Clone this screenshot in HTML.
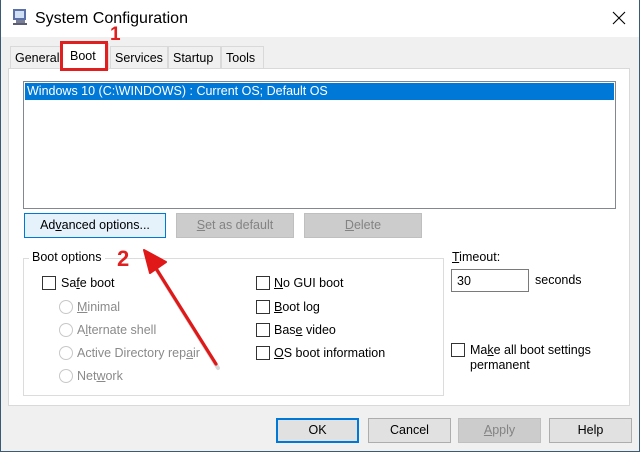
<!DOCTYPE html>
<html><head><meta charset="utf-8"><style>
*{box-sizing:border-box;margin:0;padding:0}
body{width:640px;height:452px;overflow:hidden;background:#f0f0f0;font-family:"Liberation Sans",sans-serif;font-size:12.5px;color:#000;position:relative}
.a{position:absolute;white-space:nowrap}
.tab{position:absolute;top:46px;height:22px;border:1px solid #d9d9d9;border-bottom:none;background:#f0f0f0;font-size:12.5px;padding:4px 0 0 4px;overflow:visible}
.btn{position:absolute;height:25px;border:1px solid #adadad;background:#e1e1e1;text-align:center;line-height:23px;font-size:12.5px}
.dis{background:#cccccc;border-color:#bfbfbf;color:#838383}
.cb{position:absolute;width:14px;height:14px;border:1px solid #333;background:#fff}
.rd{position:absolute;width:14px;height:14px;border:1px solid #c8c8c8;border-radius:50%;background:#fff}
.g{color:#8a8a8a}
u{text-decoration:underline}
</style></head><body>
<div class="a" style="left:0;top:0;width:640px;height:37px;background:#fff"></div>
<div class="a" style="left:0;top:0;width:1px;height:452px;background:#3b5a74"></div>
<div class="a" style="left:639px;top:0;width:1px;height:452px;background:#3b5a74"></div>
<div class="a" style="left:0;top:451px;width:640px;height:1px;background:#3b5a74"></div>
<svg class="a" style="left:11px;top:8px" width="18" height="18"><rect x="2" y="1" width="13" height="11" fill="#5b6fa8"/><rect x="4" y="3" width="9" height="7" fill="#cfe0f5"/><rect x="5" y="12" width="9" height="3" fill="#7a7f95"/><rect x="2" y="15" width="14" height="2" fill="#5a5f75"/></svg>
<div class="a" style="left:35px;top:10px;font-size:16px">System Configuration</div>
<svg class="a" style="left:611px;top:10px" width="16" height="16"><path d="M2 2L14 14M14 2L2 14" stroke="#000" stroke-width="1.1"/></svg>

<div class="a" style="left:8px;top:68px;width:622px;height:338px;background:#fff;border:1px solid #d9d9d9"></div>
<div class="tab" style="left:10px;width:52px">General</div>
<div class="tab" style="left:110px;width:58px">Services</div>
<div class="tab" style="left:168px;width:53px">Startup</div>
<div class="tab" style="left:221px;width:43px">Tools</div>
<div class="a" style="left:62px;top:43px;width:47px;height:27px;background:#fff;border:1px solid #d9d9d9;border-bottom:none;font-size:12.5px;padding:5px 0 0 7px">Boot</div>
<div class="a" style="left:60px;top:41px;width:48px;height:30px;border:3px solid #e02020"></div>
<div class="a" style="left:110px;top:24px;font-size:19px;font-weight:bold;color:#e02020">1</div>

<div class="a" style="left:23px;top:81px;width:593px;height:128px;border:1px solid #828790;background:#fff"></div>
<div class="a" style="left:25px;top:83px;width:589px;height:17px;background:#0078d7;color:#fff;padding:1px 0 0 2px;font-size:12.5px">Windows 10 (C:\WINDOWS) : Current OS; Default OS</div>

<div class="btn" style="left:24px;top:213px;width:142px;background:#e5f1fb;border-color:#0078d7">Ad<u>v</u>anced options...</div>
<div class="btn dis" style="left:176px;top:213px;width:118px"><u>S</u>et as default</div>
<div class="btn dis" style="left:304px;top:213px;width:118px"><u>D</u>elete</div>

<div class="a" style="left:23px;top:258px;width:421px;height:138px;border:1px solid #dcdcdc"></div>
<div class="a" style="left:29px;top:250px;background:#fff;padding:0 3px">Boot options</div>
<div class="cb" style="left:42px;top:276px"></div><div class="a" style="left:61px;top:276px">Sa<u>f</u>e boot</div>
<div class="rd" style="left:59px;top:300px"></div><div class="a g" style="left:77px;top:300px"><u>M</u>inimal</div>
<div class="rd" style="left:59px;top:323px"></div><div class="a g" style="left:77px;top:323px">A<u>l</u>ternate shell</div>
<div class="rd" style="left:59px;top:346px"></div><div class="a g" style="left:77px;top:346px">Active Directory rep<u>a</u>ir</div>
<div class="rd" style="left:59px;top:369px"></div><div class="a g" style="left:77px;top:369px">Net<u>w</u>ork</div>
<div class="cb" style="left:256px;top:276px"></div><div class="a" style="left:274px;top:276px"><u>N</u>o GUI boot</div>
<div class="cb" style="left:256px;top:300px"></div><div class="a" style="left:274px;top:300px"><u>B</u>oot log</div>
<div class="cb" style="left:256px;top:323px"></div><div class="a" style="left:274px;top:323px">Bas<u>e</u> video</div>
<div class="cb" style="left:256px;top:346px"></div><div class="a" style="left:274px;top:346px"><u>O</u>S boot information</div>

<div class="a" style="left:452px;top:250px"><u>T</u>imeout:</div>
<div class="a" style="left:451px;top:269px;width:78px;height:23px;border:1px solid #7a7a7a;background:#fff;padding:4px 0 0 5px">30</div>
<div class="a" style="left:535px;top:273px">seconds</div>
<div class="cb" style="left:451px;top:343px"></div>
<div class="a" style="left:470px;top:343px;line-height:15px">Ma<u>k</u>e all boot settings<br>permanent</div>

<div class="btn" style="left:276px;top:418px;width:83px;border:2px solid #0078d7;line-height:21px;background:#e1e1e1">OK</div>
<div class="btn" style="left:368px;top:418px;width:83px">Cancel</div>
<div class="btn dis" style="left:458px;top:418px;width:83px"><u>A</u>pply</div>
<div class="btn" style="left:549px;top:418px;width:83px">Help</div>

<div class="a" style="left:117px;top:246px;font-size:22px;font-weight:bold;color:#e02020">2</div>
<svg class="a" style="left:0;top:0" width="640" height="452"><path d="M218 368L153 264" stroke="#b0b0b0" stroke-opacity="0.5" stroke-width="4" stroke-linecap="round"/><path d="M216 364L152 262" stroke="#e01818" stroke-width="3.2" stroke-linecap="round"/><path d="M144 250L166 262L150 273Z" fill="#e01818" stroke="#e01818" stroke-width="2" stroke-linejoin="round"/></svg>
</body></html>
